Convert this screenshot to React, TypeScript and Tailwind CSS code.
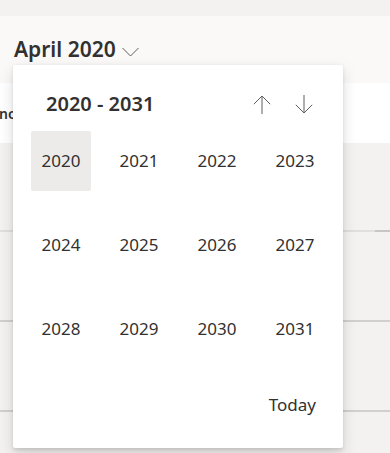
import React from 'react'

const years = [2020, 2021, 2022, 2023, 2024, 2025, 2026, 2027, 2028, 2029, 2030, 2031]

function ArrowUp() {
  return (
    <svg width="18" height="19" viewBox="0 0 18 19" fill="none" stroke="#605e5c" strokeWidth="1">
      <path d="M9 1 V19" />
      <path d="M0.8 9.2 L9 1 L17.2 9.2" />
    </svg>
  )
}

function ArrowDown() {
  return (
    <svg width="18" height="19" viewBox="0 0 18 19" fill="none" stroke="#605e5c" strokeWidth="1">
      <path d="M9 0 V18" />
      <path d="M0.8 9.8 L9 18 L17.2 9.8" />
    </svg>
  )
}

function Chevron() {
  return (
    <svg className="mt-[6px]" width="17" height="10" viewBox="0 0 17 10" fill="none" stroke="#605e5c" strokeWidth="1">
      <path d="M0.5 1 L8.5 9 L16.5 1" />
    </svg>
  )
}

export default function App() {
  return (
    <div className="relative w-[390px] h-[453px] overflow-hidden bg-[#f3f2f1] text-[#323130] font-['Segoe_UI','Noto_Sans',sans-serif]">
      {/* top strip */}
      <div className="h-[16px]" />

      {/* header */}
      <div className="h-[67px] bg-[#faf9f8] pl-[14px] pt-[19px]">
        <div className="flex items-center gap-[6px]">
          <span className="text-[21px] leading-[28px] font-semibold">April 2020</span>
          <Chevron />
        </div>
      </div>

      {/* column header row */}
      <div className="h-[60px] bg-white flex items-center overflow-hidden">
        <span className="-ml-[1px] text-[14px] font-semibold whitespace-nowrap">nce</span>
      </div>

      {/* table rows */}
      <div className="h-[87px]" />
      <div className="h-[2px] bg-[#e1dfdd] flex justify-end">
        <div className="w-[15px] h-full bg-[#c8c6c4]" />
      </div>
      <div className="h-[88px]" />
      <div className="h-[2px] bg-[#d2d0ce]" />
      <div className="h-[88px]" />
      <div className="h-[2px] bg-[#d2d0ce]" />

      {/* year picker callout */}
      <div className="absolute left-[13px] top-[65px] w-[330px] h-[383px] bg-white rounded-[2px] shadow-[0_6.4px_14.4px_0_rgba(0,0,0,0.132),0_1.2px_3.6px_0_rgba(0,0,0,0.108)] flex flex-col">
        <div className="flex items-center justify-between pt-[25px] pl-[33px] pr-[30px]">
          <span className="text-[20px] leading-[28px] font-semibold">2020 - 2031</span>
          <div className="flex items-center gap-[24px]">
            <ArrowUp />
            <ArrowDown />
          </div>
        </div>

        <div className="mt-[13px] ml-[18px] grid grid-cols-[repeat(4,60px)] gap-x-[18px] gap-y-[24px]">
          {years.map((y) => (
            <div
              key={y}
              className={`h-[60px] flex items-center justify-center rounded-[2px] text-[17px] ${
                y === 2020 ? 'bg-[#edebe9]' : ''
              }`}
            >
              {y}
            </div>
          ))}
        </div>

        <div className="mt-[34px] pr-[27px] flex justify-end">
          <span className="text-[17px] leading-[24px]">Today</span>
        </div>
      </div>
    </div>
  )
}
